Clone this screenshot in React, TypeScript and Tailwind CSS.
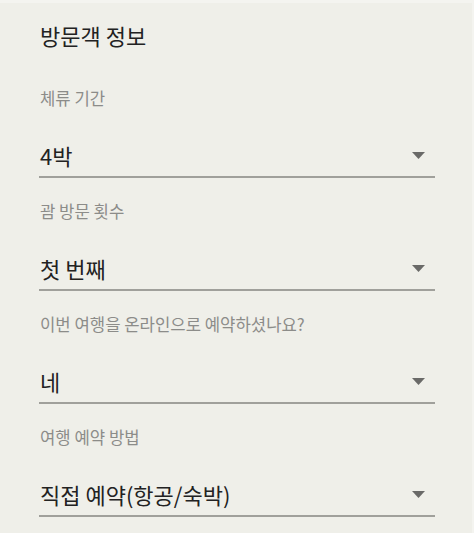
import React from "react";

const fields = [
  { label: "체류 기간", value: "4박" },
  { label: "괌 방문 횟수", value: "첫 번째" },
  { label: "이번 여행을 온라인으로 예약하셨나요?", value: "네" },
  { label: "여행 예약 방법", value: "직접 예약(항공/숙박)" },
];

function Arrow() {
  return (
    <svg width="13" height="7" viewBox="0 0 13 7" className="shrink-0">
      <path d="M0 0 L13 0 L6.5 7 Z" fill="#6a6a68" />
    </svg>
  );
}

export default function App() {
  return (
    <div
      className="w-[474px] h-[533px] bg-[#efefe9] border-t-[3px] border-r-[2px] border-[#f4f4f0] overflow-hidden pl-[39px] pr-[37px] pt-[18px]"
      style={{ fontFamily: '"Noto Sans CJK KR", "Noto Sans", sans-serif' }}
    >
      <h1 className="text-[22px] leading-[28px] text-[#222222] pl-[1px]">방문객 정보</h1>
      <div className="mt-[39px] flex flex-col">
        {fields.map((f, i) => (
          <div key={i} className={i === 0 ? "" : "mt-[23px]"}>
            <div className="text-[16.7px] leading-[20px] text-[#8c8c89] pl-[1px]">{f.label}</div>
            <div className="mt-[33px] flex items-center justify-between pb-[7px] pr-[10px] border-b-2 border-[#a0a09b]">
              <span className="text-[22px] leading-[28px] text-[#222222] pl-[1px]">{f.value}</span>
              <Arrow />
            </div>
          </div>
        ))}
      </div>
    </div>
  );
}
